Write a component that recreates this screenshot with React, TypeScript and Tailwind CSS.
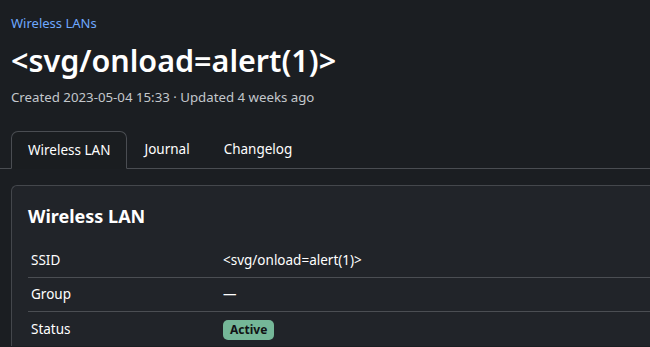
export default function App() {
  const rows: { label: string; value: React.ReactNode }[] = [
    { label: "SSID", value: "<svg/onload=alert(1)>" },
    { label: "Group", value: "—" },
    {
      label: "Status",
      value: (
        <span className="inline-flex h-[20px] items-center rounded-[5px] bg-[#75b798] px-[7px] text-[12px] font-bold text-[#111315]">
          Active
        </span>
      ),
    },
  ];

  return (
    <div
      className="h-[347px] w-[650px] overflow-hidden bg-[#1b1e22] text-[#f1f3f5]"
      style={{ fontFamily: '"Noto Sans", "Open Sans", sans-serif' }}
    >
      <div className="px-[11px] pt-[10px]">
        <a className="text-[13px] leading-[20px] text-[#6ea8fe]">Wireless LANs</a>
        <h1 className="mt-[7px] text-[30.5px] font-semibold leading-[38px] text-white">
          {"<svg/onload=alert(1)>"}
        </h1>
        <p className="mt-[8px] text-[13.25px] leading-[20px] text-[#c3c7cc]">
          Created 2023-05-04 15:33 · Updated 4 weeks ago
        </p>
      </div>

      <div className="mt-[24px] flex border-b border-[#4a4d52] pl-[11px]">
        <div className="-mb-px flex h-[38px] items-center rounded-t-[7px] border border-b-[#1a1d20] border-[#4a4d52] bg-[#1a1d20] px-[16px] text-[13.5px] text-white">
          Wireless LAN
        </div>
        <div className="flex h-[37px] items-center px-[17px] text-[13.5px] text-white">Journal</div>
        <div className="flex h-[37px] items-center px-[17px] text-[13.5px] text-white">Changelog</div>
      </div>

      <div className="ml-[11px] mt-[16px] w-[660px] rounded-t-[6px] border-l border-t border-[#44474c] bg-[#212429] pl-[16px] pt-[16px]">
        <h2 className="text-[18px] font-bold leading-[28px] text-white">Wireless LAN</h2>
        <div className="mt-[14px]">
          {rows.map((r, i) => (
            <div
              key={r.label}
              className={`flex h-[34px] items-center text-[13.5px] text-white ${i < rows.length - 1 ? "border-b border-[#4b4e53]" : ""}`}
            >
              <div className="w-[195px] pl-[3px]">{r.label}</div>
              <div>{r.value}</div>
            </div>
          ))}
        </div>
      </div>
    </div>
  );
}
